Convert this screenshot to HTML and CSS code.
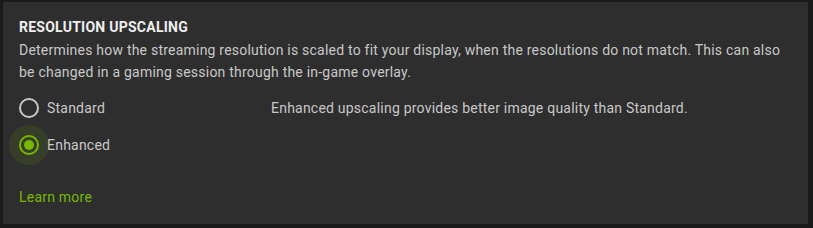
FILE: index.html
```html
<!DOCTYPE html>
<html>
<head>
<meta charset="utf-8">
<link rel="stylesheet" href="styles.css">
</head>
<body>
<div class="card">
  <div class="title">RESOLUTION UPSCALING</div>
  <div class="desc">Determines how the streaming resolution is scaled to fit your display, when the resolutions do not match. This can also be changed in a gaming session through the in-game overlay.</div>
  <div class="options">
    <div class="row">
      <div class="opt"><span class="radio"></span><span class="label">Standard</span></div>
      <div class="hint">Enhanced upscaling provides better image quality than Standard.</div>
    </div>
    <div class="row">
      <div class="opt"><span class="radio on"></span><span class="label">Enhanced</span></div>
    </div>
  </div>
  <a class="learn">Learn more</a>
</div>
</body>
</html>
```
FILE: styles.css
```css
html, body { margin: 0; padding: 0; }
body {
  background: #1a1a1a;
  font-family: Roboto, "Liberation Sans", sans-serif;
  letter-spacing: 0.22px;
  width: 813px;
  height: 228px;
  padding: 2px 5px 4px 3px;
  box-sizing: border-box;
}
.card {
  background: #2e2e2e;
  height: 222px;
  box-sizing: border-box;
  padding: 15px 16px;
  display: flex;
  flex-direction: column;
}
.title {
  font-size: 14px;
  font-weight: 700;
  line-height: 20px;
  color: #eeeeee;
  letter-spacing: 0.25px;
}
.desc {
  margin-top: 2px;
  font-size: 14px;
  line-height: 22px;
  color: #c8c8c8;
}
.options {
  margin-top: 7px;
  display: flex;
  flex-direction: column;
  gap: 1px;
}
.row {
  display: grid;
  grid-template-columns: 252px 1fr;
  height: 36px;
  align-items: center;
}
.opt {
  display: flex;
  align-items: center;
  gap: 8px;
}
.radio {
  position: relative;
  width: 20px;
  height: 20px;
  box-sizing: border-box;
  border: 2px solid #c8c8c8;
  border-radius: 50%;
  flex: none;
}
.radio.on { border-color: #76b900; }
.radio.on::before {
  content: "";
  position: absolute;
  left: -12px; top: -12px;
  width: 40px; height: 40px;
  border-radius: 50%;
  background: rgba(118, 185, 0, 0.12);
}
.radio.on::after {
  content: "";
  position: absolute;
  left: 3px; top: 3px;
  width: 10px; height: 10px;
  border-radius: 50%;
  background: #76b900;
}
.label, .hint {
  font-size: 14px;
  line-height: 20px;
  color: #c8c8c8;
}
.learn {
  margin-top: 24px;
  font-size: 14px;
  line-height: 20px;
  color: #76b900;
  align-self: flex-start;
}
```
